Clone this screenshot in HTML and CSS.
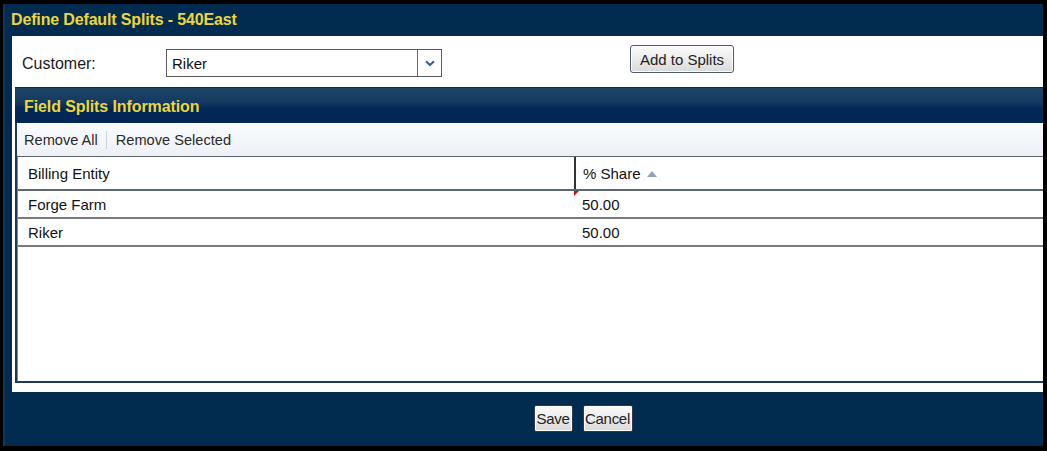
FILE: index.html
```html
<!DOCTYPE html>
<html>
<head>
<meta charset="utf-8">
<link rel="stylesheet" href="styles.css">
</head>
<body>
<div class="window">
  <div class="titlebar">Define Default Splits - 540East</div>
  <div class="content">
    <div class="customer-row">
      <label class="cust-label">Customer:</label>
      <div class="combo">
        <span class="combo-value">Riker</span>
        <span class="combo-btn">
          <svg width="10" height="7" viewBox="0 0 10 7"><path d="M1 1.2 L5 5 L9 1.2" fill="none" stroke="#3f5f8f" stroke-width="2.2"/></svg>
        </span>
      </div>
      <button class="btn add-btn">Add to Splits</button>
    </div>
    <div class="panel">
      <div class="panel-header">Field Splits Information</div>
      <div class="panel-body">
        <div class="toolbar">
          <span class="tb-item">Remove All</span>
          <span class="tb-sep"></span>
          <span class="tb-item">Remove Selected</span>
        </div>
        <div class="grid">
          <div class="grid-row grid-head">
            <div class="cell col1">Billing Entity</div>
            <div class="cell col2 head-share">% Share <span class="sort-up"></span></div>
          </div>
          <div class="grid-row">
            <div class="cell col1">Forge Farm</div>
            <div class="cell col2 dirty">50.00</div>
          </div>
          <div class="grid-row">
            <div class="cell col1">Riker</div>
            <div class="cell col2">50.00</div>
          </div>
        </div>
      </div>
    </div>
  </div>
  <div class="footer">
    <button class="btn foot-btn save-btn">Save</button>
    <button class="btn foot-btn cancel-btn">Cancel</button>
  </div>
</div>
</body>
</html>
```
FILE: styles.css
```css
html, body {
  margin: 0;
  padding: 0;
  background: #000;
  height: 451px;
  overflow: hidden;
}
body {
  font-family: "Liberation Sans", Arial, sans-serif;
  color: #1a1a1a;
}
.window {
  margin: 4px 4px 0 3px;
  height: 442px;
  background: #022b50;
  display: flex;
  flex-direction: column;
  border-left: 2px solid #13355a;
  box-sizing: border-box;
}
.titlebar {
  height: 32px;
  line-height: 31px;
  padding-left: 6px;
  color: #ecd63a;
  font-weight: bold;
  font-size: 16px;
  letter-spacing: -0.15px;
}
.content {
  margin-left: 7px;
  height: 356px;
  background: #fff;
  overflow: hidden;
  display: flex;
  flex-direction: column;
}
.customer-row {
  height: 51px;
  display: flex;
  align-items: flex-start;
  flex-shrink: 0;
}
.cust-label {
  margin-left: 10px;
  margin-top: 19px;
  font-size: 16px;
  color: #1a1a1a;
  width: 144px;
}
.combo {
  margin-top: 13px;
  width: 276px;
  height: 28px;
  box-sizing: border-box;
  border: 1px solid #5a5a5a;
  display: flex;
  align-items: stretch;
  background: #fff;
}
.combo-value {
  flex: 1;
  padding-left: 5px;
  line-height: 28px;
  font-size: 15px;
  color: #111;
}
.combo-btn {
  width: 23px;
  border-left: 1px solid #6a6a6a;
  display: flex;
  align-items: center;
  justify-content: center;
}
.btn {
  font-family: "Liberation Sans", Arial, sans-serif;
  font-size: 15px;
  color: #222;
  background: linear-gradient(#fafafa, #ececec 50%, #d9d9d9);
  border: 1px solid #4b5b70;
  border-radius: 3px;
  padding: 0;
  box-shadow: inset 0 0 0 1px #fff;
}
.add-btn {
  margin-left: 188px;
  margin-top: 9px;
  width: 104px;
  height: 28px;
}
.panel {
  margin-left: 3px;
  width: 1100px;
  display: flex;
  flex-direction: column;
  height: 296px;
  flex-shrink: 0;
}
.panel-header {
  height: 36px;
  line-height: 37px;
  box-sizing: border-box;
  padding-left: 9px;
  background: linear-gradient(#1f4468, #153a60 40%, #022656 60%, #022756);
  border-top: 1px solid #0b2d52;
  color: #ecd63a;
  font-weight: bold;
  font-size: 16px;
  letter-spacing: -0.1px;
}
.panel-body {
  flex: 1;
  border-left: 2px solid #1d3a5c;
  border-bottom: 2px solid #1d3a5c;
  display: flex;
  flex-direction: column;
  background: #fff;
}
.toolbar {
  height: 34px;
  box-sizing: border-box;
  background: linear-gradient(#f9fbfd, #edf1f7);
  border-bottom: 1px solid #5b6470;
  display: flex;
  align-items: center;
  padding-left: 7px;
  font-size: 14.6px;
  color: #2a2a2a;
}
.tb-sep {
  width: 1px;
  height: 18px;
  background: #c7d0dc;
  margin: 0 9px 0 8px;
}
.grid {
  flex: 1;
  display: flex;
  flex-direction: column;
  border-left: 1px solid #8a8a8a;
}
.grid-row {
  display: flex;
  height: 30px;
  box-sizing: border-box;
  border-bottom: 2px solid #7a7a7a;
  font-size: 15px;
  color: #111;
}
.grid-row + .grid-row {
  height: 28px;
}
.grid-head {
  height: 34px;
  border-bottom: 2px solid #5e6670;
}
.cell {
  display: flex;
  align-items: center;
  box-sizing: border-box;
}
.col1 {
  width: 556px;
  padding-left: 10px;
}
.col2 {
  flex: 1;
  padding-left: 8px;
  position: relative;
}
.head-share {
  border-left: 2px solid #333;
  padding-left: 7px;
}
.sort-up {
  display: inline-block;
  width: 0;
  height: 0;
  border-left: 5px solid transparent;
  border-right: 5px solid transparent;
  border-bottom: 6px solid #8ba3c8;
  margin-left: 6px;
  margin-top: 1px;
}
.dirty::before {
  content: "";
  position: absolute;
  left: 0;
  top: 0;
  width: 0;
  height: 0;
  border-top: 5px solid #d01010;
  border-right: 5px solid transparent;
}
.footer {
  flex: 1;
  display: flex;
  align-items: center;
  justify-content: center;
  gap: 10px;
  padding-left: 118px;
  padding-bottom: 1px;
}
.foot-btn {
  height: 27px;
  border-radius: 2px;
  border: 1px solid #2c3c50;
  letter-spacing: -0.3px;
}
.save-btn { width: 39px; }
.cancel-btn { width: 50px; }
```
